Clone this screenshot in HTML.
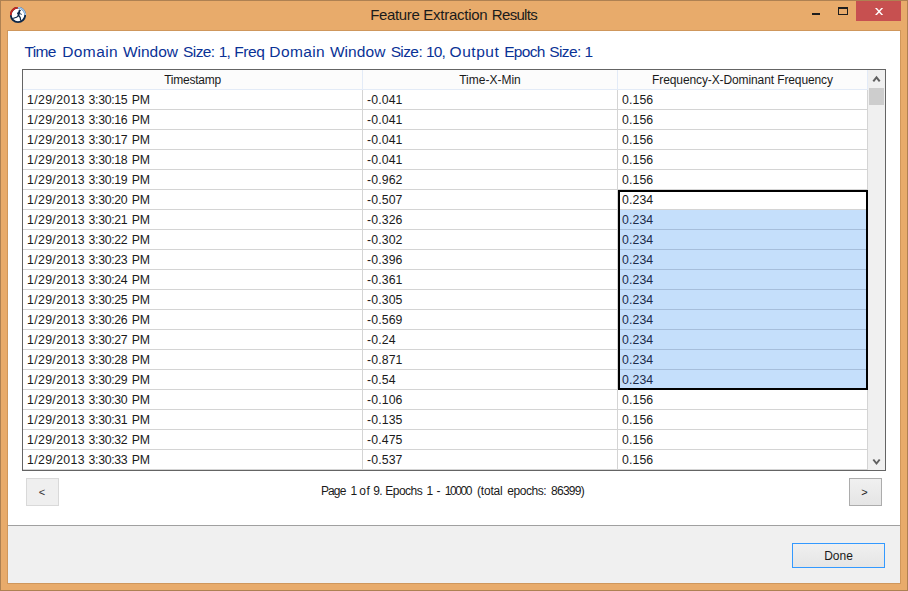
<!DOCTYPE html>
<html><head><meta charset="utf-8"><title>Feature Extraction Results</title>
<style>
html,body{margin:0;padding:0;}
body{width:908px;height:591px;overflow:hidden;background:#E8AB6B;font-family:"Liberation Sans",sans-serif;position:relative;color:#1a1a1a;}
#win{position:absolute;left:0;top:0;width:908px;height:591px;box-shadow:inset 0 0 0 1px #AE8152;background:#E8AB6B;}
#title{position:absolute;left:0;top:7px;width:908px;height:15px;font-size:15px;line-height:15px;color:#1b1b1b;white-space:pre;}
#icon{position:absolute;left:10px;top:7px;width:16px;height:16px;}
#close{position:absolute;left:856px;top:1px;width:45px;height:20px;background:#C75050;}
#max{position:absolute;left:838px;top:7px;width:8px;height:5px;border:1px solid #1e1e1e;border-top-width:2px;}
#min{position:absolute;left:812px;top:13px;width:8px;height:2px;background:#1e1e1e;}
#client{position:absolute;left:8px;top:31px;width:892px;height:552px;background:#fff;outline:1px solid #CF975C;}
#hdr{position:absolute;left:0;top:12px;width:892px;height:18px;font-size:15.5px;line-height:18px;color:#0A3296;white-space:pre;}
#grid{position:absolute;left:14px;top:38px;width:862px;height:400px;border:1px solid #646464;background:#fff;overflow:hidden;}
#gh{position:absolute;left:0;top:0;width:845px;height:19px;background:#FCFCFC;border-bottom:1px solid #E3EBF7;}
.h{position:absolute;top:0;height:19px;line-height:21px;font-size:12px;text-align:center;white-space:pre;border-right:1px solid #E3EBF7;}
.r{position:absolute;left:0;width:845px;height:19px;border-bottom:1px solid #D4D4D4;}
.c{position:absolute;top:0;height:19px;line-height:21px;font-size:12.3px;letter-spacing:0.11px;white-space:pre;border-right:1px solid #D4D4D4;padding-left:4px;box-sizing:border-box;}
.c1,.h1{left:0;width:340px;}
.c2,.h2{left:340px;width:255px;}
.c3,.h3{left:595px;width:250px;}
.h1{width:339px} .h2{width:254px} .h3{width:249px}
.sel{background:#C5DFFB;color:#1c2c4a;height:20px;border-bottom:1px solid #A6BEDB;}
#selbox{position:absolute;left:595px;top:120px;width:246px;height:196px;border:2px solid #000;}
#sb{position:absolute;left:845px;top:0;width:17px;height:400px;background:#F0F0F0;}
#thumb{position:absolute;left:1px;top:18px;width:15px;height:17px;background:#CDCDCD;}
.btn{position:absolute;box-sizing:border-box;font-size:12px;text-align:center;}
#prev{left:18px;top:447px;width:33px;height:28px;background:#EFEFEF;border:1px solid #D9D9D9;line-height:27px;font-size:11px;color:#333;text-indent:-1px;}
#next{left:841px;top:447px;width:33px;height:28px;background:linear-gradient(#F0F0F0,#E5E5E5);border:1px solid #ACACAC;line-height:27px;font-size:11px;text-indent:-2px;}
#page{position:absolute;left:0;top:452px;width:892px;height:16px;font-size:12px;line-height:16px;white-space:pre;}
#bar{position:absolute;left:0;top:494px;width:892px;height:57px;background:#F0F0F0;border-top:1px solid #A0A0A0;}
#done{left:784px;top:512px;width:93px;height:25px;background:linear-gradient(#F0F0F0,#E5E5E5);border:1px solid #3399FF;line-height:25px;}
#title span,#hdr span,#page span,.c1 span{position:absolute;top:0;white-space:pre;}
</style></head><body>
<div id="win">
<svg id="icon" viewBox="0 0 16 16"><circle cx="8" cy="7.9" r="7.2" fill="#fff" stroke="#0d2748" stroke-width="1.8"/><path d="M0.8 8.2 A7.2 7.2 0 0 1 7.9 0.7" fill="none" stroke="#c9281f" stroke-width="1.8"/><path d="M7.9 0.7 A7.2 7.2 0 0 1 15.2 7.9" fill="none" stroke="#9fc4ea" stroke-width="1.8"/><g fill="none" stroke="#0d2748" stroke-linecap="round" stroke-linejoin="round"><circle cx="9.6" cy="3.6" r="0.55" stroke-width="1"/><path d="M9.3 4.8 L8.5 8.4" stroke-width="1.9"/><path d="M9 5.2 L7.4 5.9 L7.6 6.9" stroke-width="0.9"/><path d="M9.4 5.6 L10.3 7 L11.4 7.3" stroke-width="0.9"/><path d="M8.4 8.6 L6.6 10.3 L3.4 11.3" stroke-width="1.1"/><path d="M8.7 8.7 L10.2 10.5 L10.6 13.2" stroke-width="1.2"/></g></svg>
<div id="title"><span style="left:370.23px;letter-spacing:-0.360px">Feature</span><span style="left:423.34px;letter-spacing:-0.262px">Extraction</span><span style="left:491.86px;letter-spacing:-0.691px">Results</span></div>
<div id="min"></div><div id="max"></div>
<div id="close"><svg width="45" height="20" viewBox="0 0 45 20"><path d="M19 7 L20.9 7 L27.2 14 L25.3 14 Z" fill="#fff"/><path d="M27.2 7 L25.3 7 L19 14 L20.9 14 Z" fill="#fff"/></svg></div>
</div>
<div id="client">
<div id="hdr"><span style="left:16.46px;letter-spacing:-0.631px">Time</span><span style="left:54.16px;letter-spacing:0.429px">Domain</span><span style="left:114.91px;letter-spacing:-0.020px">Window</span><span style="left:175.12px;letter-spacing:-0.626px">Size:</span><span style="left:210.86px;letter-spacing:-0.947px">1,</span><span style="left:226.16px;letter-spacing:-0.425px">Freq</span><span style="left:261.32px;letter-spacing:0.386px">Domain</span><span style="left:321.91px;letter-spacing:0.059px">Window</span><span style="left:382.63px;letter-spacing:-0.600px">Size:</span><span style="left:417.99px;letter-spacing:-0.864px">10,</span><span style="left:441.58px;letter-spacing:0.523px">Output</span><span style="left:496.28px;letter-spacing:-0.735px">Epoch</span><span style="left:541.35px;letter-spacing:-0.643px">Size:</span><span style="left:576.60px;letter-spacing:0.000px">1</span></div>
<div id="grid">
<div id="gh"><div class="h h1" style="letter-spacing:-0.25px">Timestamp</div><div class="h h2">Time-X-Min</div><div class="h h3" style="letter-spacing:-0.11px">Frequency-X-Dominant Frequency</div></div>
<div class="r" style="top:20px"><div class="c c1"><span style="left:4.00px;letter-spacing:0.359px">1/29/2013</span><span style="left:65.54px;letter-spacing:-0.317px">3:30:15</span><span style="left:108.81px;letter-spacing:-0.182px">PM</span></div><div class="c c2">-0.041</div><div class="c c3">0.156</div></div>
<div class="r" style="top:40px"><div class="c c1"><span style="left:4.00px;letter-spacing:0.359px">1/29/2013</span><span style="left:65.54px;letter-spacing:-0.317px">3:30:16</span><span style="left:108.81px;letter-spacing:-0.182px">PM</span></div><div class="c c2">-0.041</div><div class="c c3">0.156</div></div>
<div class="r" style="top:60px"><div class="c c1"><span style="left:4.00px;letter-spacing:0.359px">1/29/2013</span><span style="left:65.54px;letter-spacing:-0.317px">3:30:17</span><span style="left:108.81px;letter-spacing:-0.182px">PM</span></div><div class="c c2">-0.041</div><div class="c c3">0.156</div></div>
<div class="r" style="top:80px"><div class="c c1"><span style="left:4.00px;letter-spacing:0.359px">1/29/2013</span><span style="left:65.54px;letter-spacing:-0.317px">3:30:18</span><span style="left:108.81px;letter-spacing:-0.182px">PM</span></div><div class="c c2">-0.041</div><div class="c c3">0.156</div></div>
<div class="r" style="top:100px"><div class="c c1"><span style="left:4.00px;letter-spacing:0.359px">1/29/2013</span><span style="left:65.54px;letter-spacing:-0.317px">3:30:19</span><span style="left:108.81px;letter-spacing:-0.182px">PM</span></div><div class="c c2">-0.962</div><div class="c c3">0.156</div></div>
<div class="r" style="top:120px"><div class="c c1"><span style="left:4.00px;letter-spacing:0.359px">1/29/2013</span><span style="left:65.54px;letter-spacing:-0.317px">3:30:20</span><span style="left:108.81px;letter-spacing:-0.182px">PM</span></div><div class="c c2">-0.507</div><div class="c c3">0.234</div></div>
<div class="r" style="top:140px"><div class="c c1"><span style="left:4.00px;letter-spacing:0.359px">1/29/2013</span><span style="left:65.54px;letter-spacing:-0.317px">3:30:21</span><span style="left:108.81px;letter-spacing:-0.182px">PM</span></div><div class="c c2">-0.326</div><div class="c c3 sel">0.234</div></div>
<div class="r" style="top:160px"><div class="c c1"><span style="left:4.00px;letter-spacing:0.359px">1/29/2013</span><span style="left:65.54px;letter-spacing:-0.317px">3:30:22</span><span style="left:108.81px;letter-spacing:-0.182px">PM</span></div><div class="c c2">-0.302</div><div class="c c3 sel">0.234</div></div>
<div class="r" style="top:180px"><div class="c c1"><span style="left:4.00px;letter-spacing:0.359px">1/29/2013</span><span style="left:65.54px;letter-spacing:-0.317px">3:30:23</span><span style="left:108.81px;letter-spacing:-0.182px">PM</span></div><div class="c c2">-0.396</div><div class="c c3 sel">0.234</div></div>
<div class="r" style="top:200px"><div class="c c1"><span style="left:4.00px;letter-spacing:0.359px">1/29/2013</span><span style="left:65.54px;letter-spacing:-0.317px">3:30:24</span><span style="left:108.81px;letter-spacing:-0.182px">PM</span></div><div class="c c2">-0.361</div><div class="c c3 sel">0.234</div></div>
<div class="r" style="top:220px"><div class="c c1"><span style="left:4.00px;letter-spacing:0.359px">1/29/2013</span><span style="left:65.54px;letter-spacing:-0.317px">3:30:25</span><span style="left:108.81px;letter-spacing:-0.182px">PM</span></div><div class="c c2">-0.305</div><div class="c c3 sel">0.234</div></div>
<div class="r" style="top:240px"><div class="c c1"><span style="left:4.00px;letter-spacing:0.359px">1/29/2013</span><span style="left:65.54px;letter-spacing:-0.317px">3:30:26</span><span style="left:108.81px;letter-spacing:-0.182px">PM</span></div><div class="c c2">-0.569</div><div class="c c3 sel">0.234</div></div>
<div class="r" style="top:260px"><div class="c c1"><span style="left:4.00px;letter-spacing:0.359px">1/29/2013</span><span style="left:65.54px;letter-spacing:-0.317px">3:30:27</span><span style="left:108.81px;letter-spacing:-0.182px">PM</span></div><div class="c c2">-0.24</div><div class="c c3 sel">0.234</div></div>
<div class="r" style="top:280px"><div class="c c1"><span style="left:4.00px;letter-spacing:0.359px">1/29/2013</span><span style="left:65.54px;letter-spacing:-0.317px">3:30:28</span><span style="left:108.81px;letter-spacing:-0.182px">PM</span></div><div class="c c2">-0.871</div><div class="c c3 sel">0.234</div></div>
<div class="r" style="top:300px"><div class="c c1"><span style="left:4.00px;letter-spacing:0.359px">1/29/2013</span><span style="left:65.54px;letter-spacing:-0.317px">3:30:29</span><span style="left:108.81px;letter-spacing:-0.182px">PM</span></div><div class="c c2">-0.54</div><div class="c c3 sel">0.234</div></div>
<div class="r" style="top:320px"><div class="c c1"><span style="left:4.00px;letter-spacing:0.359px">1/29/2013</span><span style="left:65.54px;letter-spacing:-0.317px">3:30:30</span><span style="left:108.81px;letter-spacing:-0.182px">PM</span></div><div class="c c2">-0.106</div><div class="c c3">0.156</div></div>
<div class="r" style="top:340px"><div class="c c1"><span style="left:4.00px;letter-spacing:0.359px">1/29/2013</span><span style="left:65.54px;letter-spacing:-0.317px">3:30:31</span><span style="left:108.81px;letter-spacing:-0.182px">PM</span></div><div class="c c2">-0.135</div><div class="c c3">0.156</div></div>
<div class="r" style="top:360px"><div class="c c1"><span style="left:4.00px;letter-spacing:0.359px">1/29/2013</span><span style="left:65.54px;letter-spacing:-0.317px">3:30:32</span><span style="left:108.81px;letter-spacing:-0.182px">PM</span></div><div class="c c2">-0.475</div><div class="c c3">0.156</div></div>
<div class="r" style="top:380px"><div class="c c1"><span style="left:4.00px;letter-spacing:0.359px">1/29/2013</span><span style="left:65.54px;letter-spacing:-0.317px">3:30:33</span><span style="left:108.81px;letter-spacing:-0.182px">PM</span></div><div class="c c2">-0.537</div><div class="c c3">0.156</div></div>
<div id="selbox"></div>
<div id="sb"><div id="thumb"></div>
<svg style="position:absolute;left:0;top:0" width="17" height="17" viewBox="0 0 17 17"><path d="M5.3 11.4 L8.5 7.3 L11.7 11.4" stroke="#606060" stroke-width="2" fill="none"/></svg>
<svg style="position:absolute;left:0;top:383px" width="17" height="17" viewBox="0 0 17 17"><path d="M5.3 6.5 L8.5 10.5 L11.7 6.5" stroke="#606060" stroke-width="2" fill="none"/></svg>
</div>
</div>
<div class="btn" id="prev">&lt;</div>
<div id="page"><span style="left:312.95px;letter-spacing:-0.881px">Page</span><span style="left:342.45px;letter-spacing:0.000px">1</span><span style="left:351.24px;letter-spacing:0.493px">of</span><span style="left:365.37px;letter-spacing:-0.893px">9.</span><span style="left:377.27px;letter-spacing:-0.502px">Epochs</span><span style="left:418.57px;letter-spacing:0.000px">1</span><span style="left:428.52px;letter-spacing:0.000px">-</span><span style="left:436.79px;letter-spacing:-1.402px">10000</span><span style="left:468.95px;letter-spacing:-0.184px">(total</span><span style="left:499.24px;letter-spacing:-0.427px">epochs:</span><span style="left:543.02px;letter-spacing:-0.727px">86399)</span></div>
<div class="btn" id="next">&gt;</div>
<div id="bar"></div>
<div class="btn" id="done">Done</div>
</div>
</body></html>
